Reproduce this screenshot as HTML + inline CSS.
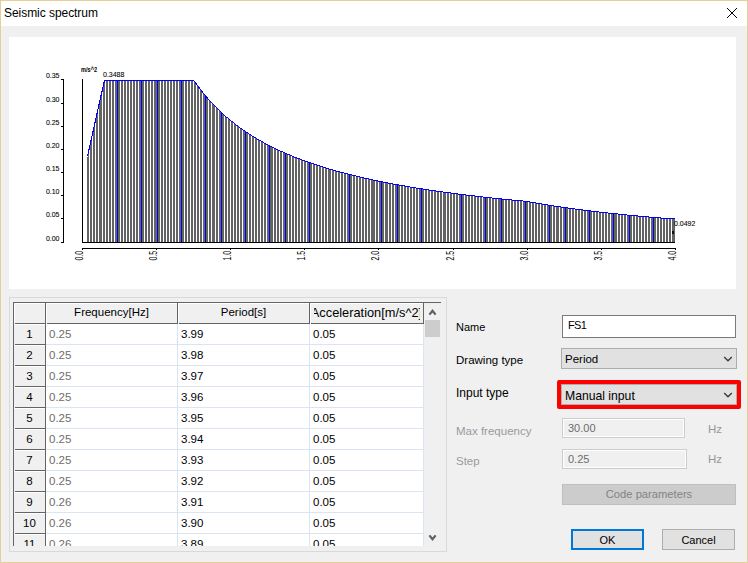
<!DOCTYPE html>
<html><head><meta charset="utf-8">
<style>
html,body{margin:0;padding:0;}
body{width:748px;height:563px;overflow:hidden;position:relative;background:#f0f0f0;font-family:"Liberation Sans",sans-serif;font-size:11.5px;color:#000;}
.a{position:absolute;}
.t{position:absolute;white-space:nowrap;line-height:1;}
#win{left:0;top:0;width:746px;height:561px;border:1px solid #e6cf95;}
#title{left:1px;top:1px;width:746px;height:25px;background:#fff;}
#chart{left:9px;top:37px;width:727px;height:252px;background:#fff;}
.box{position:absolute;box-sizing:border-box;}
.lbl{position:absolute;white-space:nowrap;line-height:1;font-size:11.5px;}
.grid .c{position:absolute;white-space:nowrap;line-height:1;font-size:11.5px;}
</style></head><body>
<div class="a" id="win"></div>
<div class="a" id="title"></div>
<div class="t" style="left:4px;top:7px;font-size:12px;letter-spacing:-0.05px;">Seismic spectrum</div>
<div class="a" id="chart"></div>
<svg class="a" style="left:0;top:0" width="748" height="563" shape-rendering="crispEdges">
<rect x="87" y="157" width="1" height="85" fill="#646464"/>
<rect x="88" y="152" width="1" height="90" fill="#646464"/>
<rect x="90" y="143" width="1" height="99" fill="#646464"/>
<rect x="91" y="139" width="1" height="103" fill="#646464"/>
<rect x="93" y="130" width="1" height="112" fill="#646464"/>
<rect x="94" y="125" width="1" height="117" fill="#646464"/>
<rect x="96" y="116" width="1" height="126" fill="#646464"/>
<rect x="97" y="112" width="1" height="130" fill="#646464"/>
<rect x="99" y="103" width="1" height="139" fill="#646464"/>
<rect x="100" y="98" width="1" height="144" fill="#646464"/>
<rect x="101" y="94" width="1" height="148" fill="#646464"/>
<rect x="103" y="85" width="1" height="157" fill="#646464"/>
<rect x="104" y="81" width="1" height="161" fill="#646464"/>
<rect x="106" y="81" width="2" height="161" fill="#646464"/>
<rect x="109" y="81" width="2" height="161" fill="#646464"/>
<rect x="112" y="81" width="2" height="161" fill="#646464"/>
<rect x="115" y="81" width="2" height="161" fill="#646464"/>
<rect x="118" y="81" width="2" height="161" fill="#646464"/>
<rect x="121" y="81" width="2" height="161" fill="#646464"/>
<rect x="124" y="81" width="2" height="161" fill="#646464"/>
<rect x="127" y="81" width="2" height="161" fill="#646464"/>
<rect x="130" y="81" width="2" height="161" fill="#646464"/>
<rect x="133" y="81" width="2" height="161" fill="#646464"/>
<rect x="136" y="81" width="2" height="161" fill="#646464"/>
<rect x="139" y="81" width="2" height="161" fill="#646464"/>
<rect x="142" y="81" width="2" height="161" fill="#646464"/>
<rect x="145" y="81" width="2" height="161" fill="#646464"/>
<rect x="148" y="81" width="2" height="161" fill="#646464"/>
<rect x="151" y="81" width="2" height="161" fill="#646464"/>
<rect x="154" y="81" width="3" height="161" fill="#646464"/>
<rect x="158" y="81" width="2" height="161" fill="#646464"/>
<rect x="161" y="81" width="2" height="161" fill="#646464"/>
<rect x="164" y="81" width="2" height="161" fill="#646464"/>
<rect x="167" y="81" width="2" height="161" fill="#646464"/>
<rect x="170" y="81" width="2" height="161" fill="#646464"/>
<rect x="173" y="81" width="2" height="161" fill="#646464"/>
<rect x="176" y="81" width="2" height="161" fill="#646464"/>
<rect x="179" y="81" width="2" height="161" fill="#646464"/>
<rect x="182" y="81" width="2" height="161" fill="#646464"/>
<rect x="185" y="81" width="2" height="161" fill="#646464"/>
<rect x="188" y="81" width="2" height="161" fill="#646464"/>
<rect x="191" y="81" width="2" height="161" fill="#646464"/>
<rect x="194" y="82" width="1" height="160" fill="#646464"/>
<rect x="195" y="83" width="1" height="159" fill="#646464"/>
<rect x="197" y="86" width="1" height="156" fill="#646464"/>
<rect x="198" y="87" width="1" height="155" fill="#646464"/>
<rect x="200" y="90" width="1" height="152" fill="#646464"/>
<rect x="201" y="91" width="1" height="151" fill="#646464"/>
<rect x="203" y="94" width="1" height="148" fill="#646464"/>
<rect x="204" y="95" width="1" height="147" fill="#646464"/>
<rect x="206" y="97" width="1" height="145" fill="#646464"/>
<rect x="207" y="99" width="1" height="143" fill="#646464"/>
<rect x="209" y="101" width="1" height="141" fill="#646464"/>
<rect x="210" y="102" width="1" height="140" fill="#646464"/>
<rect x="212" y="104" width="1" height="138" fill="#646464"/>
<rect x="213" y="105" width="1" height="137" fill="#646464"/>
<rect x="214" y="106" width="1" height="136" fill="#646464"/>
<rect x="216" y="108" width="1" height="134" fill="#646464"/>
<rect x="217" y="109" width="1" height="133" fill="#646464"/>
<rect x="219" y="111" width="1" height="131" fill="#646464"/>
<rect x="220" y="112" width="1" height="130" fill="#646464"/>
<rect x="222" y="114" width="1" height="128" fill="#646464"/>
<rect x="223" y="115" width="1" height="127" fill="#646464"/>
<rect x="225" y="117" width="1" height="125" fill="#646464"/>
<rect x="226" y="118" width="1" height="124" fill="#646464"/>
<rect x="228" y="119" width="1" height="123" fill="#646464"/>
<rect x="229" y="120" width="1" height="122" fill="#646464"/>
<rect x="231" y="122" width="2" height="120" fill="#646464"/>
<rect x="234" y="124" width="1" height="118" fill="#646464"/>
<rect x="235" y="125" width="1" height="117" fill="#646464"/>
<rect x="237" y="126" width="1" height="116" fill="#646464"/>
<rect x="238" y="127" width="1" height="115" fill="#646464"/>
<rect x="240" y="129" width="2" height="113" fill="#646464"/>
<rect x="243" y="131" width="2" height="111" fill="#646464"/>
<rect x="246" y="133" width="2" height="109" fill="#646464"/>
<rect x="249" y="135" width="2" height="107" fill="#646464"/>
<rect x="252" y="137" width="2" height="105" fill="#646464"/>
<rect x="255" y="138" width="1" height="104" fill="#646464"/>
<rect x="256" y="139" width="1" height="103" fill="#646464"/>
<rect x="258" y="140" width="1" height="102" fill="#646464"/>
<rect x="259" y="141" width="1" height="101" fill="#646464"/>
<rect x="261" y="142" width="2" height="100" fill="#646464"/>
<rect x="264" y="144" width="2" height="98" fill="#646464"/>
<rect x="267" y="145" width="1" height="97" fill="#646464"/>
<rect x="268" y="146" width="1" height="96" fill="#646464"/>
<rect x="270" y="147" width="2" height="95" fill="#646464"/>
<rect x="272" y="148" width="1" height="94" fill="#646464"/>
<rect x="274" y="149" width="2" height="93" fill="#646464"/>
<rect x="277" y="150" width="1" height="92" fill="#646464"/>
<rect x="278" y="151" width="1" height="91" fill="#646464"/>
<rect x="280" y="152" width="2" height="90" fill="#646464"/>
<rect x="283" y="153" width="2" height="89" fill="#646464"/>
<rect x="286" y="154" width="1" height="88" fill="#646464"/>
<rect x="287" y="155" width="1" height="87" fill="#646464"/>
<rect x="289" y="155" width="1" height="87" fill="#646464"/>
<rect x="290" y="156" width="1" height="86" fill="#646464"/>
<rect x="292" y="157" width="2" height="85" fill="#646464"/>
<rect x="295" y="158" width="2" height="84" fill="#646464"/>
<rect x="298" y="159" width="2" height="83" fill="#646464"/>
<rect x="301" y="160" width="1" height="82" fill="#646464"/>
<rect x="302" y="161" width="1" height="81" fill="#646464"/>
<rect x="304" y="161" width="1" height="81" fill="#646464"/>
<rect x="305" y="162" width="1" height="80" fill="#646464"/>
<rect x="307" y="162" width="1" height="80" fill="#646464"/>
<rect x="308" y="163" width="1" height="79" fill="#646464"/>
<rect x="310" y="163" width="1" height="79" fill="#646464"/>
<rect x="311" y="164" width="1" height="78" fill="#646464"/>
<rect x="313" y="164" width="1" height="78" fill="#646464"/>
<rect x="314" y="165" width="1" height="77" fill="#646464"/>
<rect x="316" y="165" width="1" height="77" fill="#646464"/>
<rect x="317" y="166" width="1" height="76" fill="#646464"/>
<rect x="319" y="166" width="1" height="76" fill="#646464"/>
<rect x="320" y="167" width="1" height="75" fill="#646464"/>
<rect x="322" y="167" width="1" height="75" fill="#646464"/>
<rect x="323" y="168" width="1" height="74" fill="#646464"/>
<rect x="325" y="168" width="1" height="74" fill="#646464"/>
<rect x="326" y="169" width="1" height="73" fill="#646464"/>
<rect x="328" y="169" width="1" height="73" fill="#646464"/>
<rect x="329" y="170" width="2" height="72" fill="#646464"/>
<rect x="332" y="170" width="1" height="72" fill="#646464"/>
<rect x="333" y="171" width="1" height="71" fill="#646464"/>
<rect x="335" y="171" width="1" height="71" fill="#646464"/>
<rect x="336" y="172" width="1" height="70" fill="#646464"/>
<rect x="338" y="172" width="2" height="70" fill="#646464"/>
<rect x="341" y="173" width="2" height="69" fill="#646464"/>
<rect x="344" y="174" width="2" height="68" fill="#646464"/>
<rect x="347" y="174" width="1" height="68" fill="#646464"/>
<rect x="348" y="175" width="1" height="67" fill="#646464"/>
<rect x="350" y="175" width="2" height="67" fill="#646464"/>
<rect x="353" y="176" width="2" height="66" fill="#646464"/>
<rect x="356" y="177" width="2" height="65" fill="#646464"/>
<rect x="359" y="177" width="1" height="65" fill="#646464"/>
<rect x="360" y="178" width="1" height="64" fill="#646464"/>
<rect x="362" y="178" width="2" height="64" fill="#646464"/>
<rect x="365" y="179" width="2" height="63" fill="#646464"/>
<rect x="368" y="179" width="1" height="63" fill="#646464"/>
<rect x="369" y="180" width="1" height="62" fill="#646464"/>
<rect x="371" y="180" width="2" height="62" fill="#646464"/>
<rect x="373" y="181" width="2" height="61" fill="#646464"/>
<rect x="376" y="181" width="2" height="61" fill="#646464"/>
<rect x="379" y="182" width="2" height="60" fill="#646464"/>
<rect x="382" y="182" width="1" height="60" fill="#646464"/>
<rect x="383" y="183" width="1" height="59" fill="#646464"/>
<rect x="385" y="183" width="3" height="59" fill="#646464"/>
<rect x="389" y="184" width="2" height="58" fill="#646464"/>
<rect x="392" y="184" width="1" height="58" fill="#646464"/>
<rect x="393" y="185" width="1" height="57" fill="#646464"/>
<rect x="395" y="185" width="2" height="57" fill="#646464"/>
<rect x="398" y="185" width="1" height="57" fill="#646464"/>
<rect x="399" y="186" width="1" height="56" fill="#646464"/>
<rect x="401" y="186" width="2" height="56" fill="#646464"/>
<rect x="404" y="186" width="1" height="56" fill="#646464"/>
<rect x="405" y="187" width="1" height="55" fill="#646464"/>
<rect x="407" y="187" width="2" height="55" fill="#646464"/>
<rect x="410" y="188" width="2" height="54" fill="#646464"/>
<rect x="413" y="188" width="2" height="54" fill="#646464"/>
<rect x="416" y="189" width="2" height="53" fill="#646464"/>
<rect x="419" y="189" width="2" height="53" fill="#646464"/>
<rect x="422" y="189" width="1" height="53" fill="#646464"/>
<rect x="423" y="190" width="1" height="52" fill="#646464"/>
<rect x="425" y="190" width="2" height="52" fill="#646464"/>
<rect x="428" y="190" width="1" height="52" fill="#646464"/>
<rect x="429" y="191" width="1" height="51" fill="#646464"/>
<rect x="431" y="191" width="2" height="51" fill="#646464"/>
<rect x="434" y="191" width="2" height="51" fill="#646464"/>
<rect x="437" y="192" width="2" height="50" fill="#646464"/>
<rect x="440" y="192" width="2" height="50" fill="#646464"/>
<rect x="443" y="193" width="3" height="49" fill="#646464"/>
<rect x="447" y="193" width="2" height="49" fill="#646464"/>
<rect x="450" y="193" width="1" height="49" fill="#646464"/>
<rect x="451" y="194" width="1" height="48" fill="#646464"/>
<rect x="453" y="194" width="2" height="48" fill="#646464"/>
<rect x="456" y="194" width="2" height="48" fill="#646464"/>
<rect x="459" y="195" width="2" height="47" fill="#646464"/>
<rect x="462" y="195" width="2" height="47" fill="#646464"/>
<rect x="465" y="195" width="1" height="47" fill="#646464"/>
<rect x="466" y="196" width="1" height="46" fill="#646464"/>
<rect x="468" y="196" width="2" height="46" fill="#646464"/>
<rect x="471" y="196" width="2" height="46" fill="#646464"/>
<rect x="474" y="196" width="1" height="46" fill="#646464"/>
<rect x="475" y="197" width="1" height="45" fill="#646464"/>
<rect x="477" y="197" width="2" height="45" fill="#646464"/>
<rect x="480" y="197" width="2" height="45" fill="#646464"/>
<rect x="483" y="198" width="2" height="44" fill="#646464"/>
<rect x="486" y="198" width="2" height="44" fill="#646464"/>
<rect x="489" y="198" width="2" height="44" fill="#646464"/>
<rect x="492" y="199" width="2" height="43" fill="#646464"/>
<rect x="495" y="199" width="2" height="43" fill="#646464"/>
<rect x="498" y="199" width="3" height="43" fill="#646464"/>
<rect x="502" y="200" width="2" height="42" fill="#646464"/>
<rect x="505" y="200" width="2" height="42" fill="#646464"/>
<rect x="508" y="200" width="2" height="42" fill="#646464"/>
<rect x="511" y="200" width="1" height="42" fill="#646464"/>
<rect x="512" y="201" width="1" height="41" fill="#646464"/>
<rect x="514" y="201" width="2" height="41" fill="#646464"/>
<rect x="517" y="201" width="2" height="41" fill="#646464"/>
<rect x="520" y="201" width="2" height="41" fill="#646464"/>
<rect x="523" y="202" width="2" height="40" fill="#646464"/>
<rect x="526" y="202" width="2" height="40" fill="#646464"/>
<rect x="529" y="202" width="1" height="40" fill="#646464"/>
<rect x="530" y="203" width="1" height="39" fill="#646464"/>
<rect x="532" y="203" width="2" height="39" fill="#646464"/>
<rect x="535" y="203" width="1" height="39" fill="#646464"/>
<rect x="536" y="204" width="1" height="38" fill="#646464"/>
<rect x="538" y="204" width="2" height="38" fill="#646464"/>
<rect x="541" y="204" width="1" height="38" fill="#646464"/>
<rect x="542" y="205" width="1" height="37" fill="#646464"/>
<rect x="544" y="205" width="2" height="37" fill="#646464"/>
<rect x="547" y="205" width="1" height="37" fill="#646464"/>
<rect x="548" y="206" width="1" height="36" fill="#646464"/>
<rect x="550" y="206" width="2" height="36" fill="#646464"/>
<rect x="553" y="206" width="1" height="36" fill="#646464"/>
<rect x="554" y="207" width="1" height="35" fill="#646464"/>
<rect x="556" y="207" width="3" height="35" fill="#646464"/>
<rect x="560" y="207" width="1" height="35" fill="#646464"/>
<rect x="561" y="208" width="1" height="34" fill="#646464"/>
<rect x="563" y="208" width="2" height="34" fill="#646464"/>
<rect x="566" y="208" width="2" height="34" fill="#646464"/>
<rect x="569" y="209" width="2" height="33" fill="#646464"/>
<rect x="572" y="209" width="2" height="33" fill="#646464"/>
<rect x="575" y="210" width="2" height="32" fill="#646464"/>
<rect x="578" y="210" width="2" height="32" fill="#646464"/>
<rect x="581" y="210" width="2" height="32" fill="#646464"/>
<rect x="584" y="211" width="2" height="31" fill="#646464"/>
<rect x="587" y="211" width="2" height="31" fill="#646464"/>
<rect x="590" y="211" width="1" height="31" fill="#646464"/>
<rect x="591" y="212" width="1" height="30" fill="#646464"/>
<rect x="593" y="212" width="2" height="30" fill="#646464"/>
<rect x="596" y="212" width="2" height="30" fill="#646464"/>
<rect x="599" y="213" width="2" height="29" fill="#646464"/>
<rect x="602" y="213" width="2" height="29" fill="#646464"/>
<rect x="605" y="213" width="2" height="29" fill="#646464"/>
<rect x="608" y="214" width="2" height="28" fill="#646464"/>
<rect x="611" y="214" width="2" height="28" fill="#646464"/>
<rect x="614" y="214" width="3" height="28" fill="#646464"/>
<rect x="618" y="215" width="2" height="27" fill="#646464"/>
<rect x="621" y="215" width="2" height="27" fill="#646464"/>
<rect x="624" y="215" width="2" height="27" fill="#646464"/>
<rect x="627" y="216" width="2" height="26" fill="#646464"/>
<rect x="630" y="216" width="2" height="26" fill="#646464"/>
<rect x="633" y="216" width="2" height="26" fill="#646464"/>
<rect x="636" y="216" width="2" height="26" fill="#646464"/>
<rect x="639" y="217" width="2" height="25" fill="#646464"/>
<rect x="642" y="217" width="2" height="25" fill="#646464"/>
<rect x="645" y="217" width="2" height="25" fill="#646464"/>
<rect x="648" y="217" width="1" height="25" fill="#646464"/>
<rect x="649" y="218" width="1" height="24" fill="#646464"/>
<rect x="651" y="218" width="2" height="24" fill="#646464"/>
<rect x="654" y="218" width="2" height="24" fill="#646464"/>
<rect x="657" y="218" width="2" height="24" fill="#646464"/>
<rect x="660" y="218" width="1" height="24" fill="#646464"/>
<rect x="661" y="219" width="1" height="23" fill="#646464"/>
<rect x="663" y="219" width="2" height="23" fill="#646464"/>
<rect x="666" y="219" width="2" height="23" fill="#646464"/>
<rect x="669" y="219" width="2" height="23" fill="#646464"/>
<rect x="672" y="219" width="3" height="23" fill="#646464"/>
<rect x="117" y="80" width="1" height="162" fill="#0000ff"/>
<rect x="141" y="80" width="1" height="162" fill="#0000ff"/>
<rect x="157" y="80" width="1" height="162" fill="#0000ff"/>
<rect x="181" y="80" width="1" height="162" fill="#0000ff"/>
<rect x="205" y="95" width="1" height="147" fill="#0000ff"/>
<rect x="221" y="112" width="1" height="130" fill="#0000ff"/>
<rect x="245" y="131" width="1" height="111" fill="#0000ff"/>
<rect x="269" y="145" width="1" height="97" fill="#0000ff"/>
<rect x="285" y="153" width="1" height="89" fill="#0000ff"/>
<rect x="309" y="162" width="1" height="80" fill="#0000ff"/>
<rect x="349" y="174" width="1" height="68" fill="#0000ff"/>
<rect x="381" y="181" width="1" height="61" fill="#0000ff"/>
<rect x="397" y="184" width="1" height="58" fill="#0000ff"/>
<rect x="421" y="188" width="1" height="54" fill="#0000ff"/>
<rect x="461" y="194" width="1" height="48" fill="#0000ff"/>
<rect x="485" y="197" width="1" height="45" fill="#0000ff"/>
<rect x="501" y="198" width="1" height="44" fill="#0000ff"/>
<rect x="525" y="201" width="1" height="41" fill="#0000ff"/>
<rect x="549" y="205" width="1" height="37" fill="#0000ff"/>
<rect x="565" y="207" width="1" height="35" fill="#0000ff"/>
<rect x="589" y="210" width="1" height="32" fill="#0000ff"/>
<rect x="613" y="213" width="1" height="29" fill="#0000ff"/>
<rect x="629" y="215" width="1" height="27" fill="#0000ff"/>
<rect x="653" y="217" width="1" height="25" fill="#0000ff"/>
<polyline points="87.5,156.5 88.5,151.5 89.5,147.5 90.5,142.5 91.5,138.5 92.5,133.5 93.5,129.5 94.5,124.5 95.5,120.5 96.5,115.5 97.5,111.5 98.5,106.5 99.5,102.5 100.5,97.5 101.5,93.5 102.5,89.5 103.5,84.5 104.5,80.5 105.5,80.5 106.5,80.5 107.5,80.5 108.5,80.5 109.5,80.5 110.5,80.5 111.5,80.5 112.5,80.5 113.5,80.5 114.5,80.5 115.5,80.5 116.5,80.5 117.5,80.5 118.5,80.5 119.5,80.5 120.5,80.5 121.5,80.5 122.5,80.5 123.5,80.5 124.5,80.5 125.5,80.5 126.5,80.5 127.5,80.5 128.5,80.5 129.5,80.5 130.5,80.5 131.5,80.5 132.5,80.5 133.5,80.5 134.5,80.5 135.5,80.5 136.5,80.5 137.5,80.5 138.5,80.5 139.5,80.5 140.5,80.5 141.5,80.5 142.5,80.5 143.5,80.5 144.5,80.5 145.5,80.5 146.5,80.5 147.5,80.5 148.5,80.5 149.5,80.5 150.5,80.5 151.5,80.5 152.5,80.5 153.5,80.5 154.5,80.5 155.5,80.5 156.5,80.5 157.5,80.5 158.5,80.5 159.5,80.5 160.5,80.5 161.5,80.5 162.5,80.5 163.5,80.5 164.5,80.5 165.5,80.5 166.5,80.5 167.5,80.5 168.5,80.5 169.5,80.5 170.5,80.5 171.5,80.5 172.5,80.5 173.5,80.5 174.5,80.5 175.5,80.5 176.5,80.5 177.5,80.5 178.5,80.5 179.5,80.5 180.5,80.5 181.5,80.5 182.5,80.5 183.5,80.5 184.5,80.5 185.5,80.5 186.5,80.5 187.5,80.5 188.5,80.5 189.5,80.5 190.5,80.5 191.5,80.5 192.5,80.5 193.5,80.5 194.5,81.5 195.5,82.5 196.5,84.5 197.5,85.5 198.5,86.5 199.5,88.5 200.5,89.5 201.5,90.5 202.5,92.5 203.5,93.5 204.5,94.5 205.5,95.5 206.5,96.5 207.5,98.5 208.5,99.5 209.5,100.5 210.5,101.5 211.5,102.5 212.5,103.5 213.5,104.5 214.5,105.5 215.5,106.5 216.5,107.5 217.5,108.5 218.5,109.5 219.5,110.5 220.5,111.5 221.5,112.5 222.5,113.5 223.5,114.5 224.5,115.5 225.5,116.5 226.5,117.5 227.5,117.5 228.5,118.5 229.5,119.5 230.5,120.5 231.5,121.5 232.5,121.5 233.5,122.5 234.5,123.5 235.5,124.5 236.5,125.5 237.5,125.5 238.5,126.5 239.5,127.5 240.5,128.5 241.5,128.5 242.5,129.5 243.5,130.5 244.5,130.5 245.5,131.5 246.5,132.5 247.5,132.5 248.5,133.5 249.5,134.5 250.5,134.5 251.5,135.5 252.5,136.5 253.5,136.5 254.5,137.5 255.5,137.5 256.5,138.5 257.5,139.5 258.5,139.5 259.5,140.5 260.5,140.5 261.5,141.5 262.5,141.5 263.5,142.5 264.5,143.5 265.5,143.5 266.5,144.5 267.5,144.5 268.5,145.5 269.5,145.5 270.5,146.5 271.5,146.5 272.5,147.5 273.5,147.5 274.5,148.5 275.5,148.5 276.5,149.5 277.5,149.5 278.5,150.5 279.5,150.5 280.5,151.5 281.5,151.5 282.5,151.5 283.5,152.5 284.5,152.5 285.5,153.5 286.5,153.5 287.5,154.5 288.5,154.5 289.5,154.5 290.5,155.5 291.5,155.5 292.5,156.5 293.5,156.5 294.5,157.5 295.5,157.5 296.5,157.5 297.5,158.5 298.5,158.5 299.5,158.5 300.5,159.5 301.5,159.5 302.5,160.5 303.5,160.5 304.5,160.5 305.5,161.5 306.5,161.5 307.5,161.5 308.5,162.5 309.5,162.5 310.5,162.5 311.5,163.5 312.5,163.5 313.5,163.5 314.5,164.5 315.5,164.5 316.5,164.5 317.5,165.5 318.5,165.5 319.5,165.5 320.5,166.5 321.5,166.5 322.5,166.5 323.5,167.5 324.5,167.5 325.5,167.5 326.5,168.5 327.5,168.5 328.5,168.5 329.5,169.5 330.5,169.5 331.5,169.5 332.5,169.5 333.5,170.5 334.5,170.5 335.5,170.5 336.5,171.5 337.5,171.5 338.5,171.5 339.5,171.5 340.5,172.5 341.5,172.5 342.5,172.5 343.5,172.5 344.5,173.5 345.5,173.5 346.5,173.5 347.5,173.5 348.5,174.5 349.5,174.5 350.5,174.5 351.5,174.5 352.5,175.5 353.5,175.5 354.5,175.5 355.5,175.5 356.5,176.5 357.5,176.5 358.5,176.5 359.5,176.5 360.5,177.5 361.5,177.5 362.5,177.5 363.5,177.5 364.5,178.5 365.5,178.5 366.5,178.5 367.5,178.5 368.5,178.5 369.5,179.5 370.5,179.5 371.5,179.5 372.5,179.5 373.5,180.5 374.5,180.5 375.5,180.5 376.5,180.5 377.5,180.5 378.5,181.5 379.5,181.5 380.5,181.5 381.5,181.5 382.5,181.5 383.5,182.5 384.5,182.5 385.5,182.5 386.5,182.5 387.5,182.5 388.5,183.5 389.5,183.5 390.5,183.5 391.5,183.5 392.5,183.5 393.5,184.5 394.5,184.5 395.5,184.5 396.5,184.5 397.5,184.5 398.5,184.5 399.5,185.5 400.5,185.5 401.5,185.5 402.5,185.5 403.5,185.5 404.5,185.5 405.5,186.5 406.5,186.5 407.5,186.5 408.5,186.5 409.5,186.5 410.5,187.5 411.5,187.5 412.5,187.5 413.5,187.5 414.5,187.5 415.5,187.5 416.5,188.5 417.5,188.5 418.5,188.5 419.5,188.5 420.5,188.5 421.5,188.5 422.5,188.5 423.5,189.5 424.5,189.5 425.5,189.5 426.5,189.5 427.5,189.5 428.5,189.5 429.5,190.5 430.5,190.5 431.5,190.5 432.5,190.5 433.5,190.5 434.5,190.5 435.5,190.5 436.5,191.5 437.5,191.5 438.5,191.5 439.5,191.5 440.5,191.5 441.5,191.5 442.5,191.5 443.5,192.5 444.5,192.5 445.5,192.5 446.5,192.5 447.5,192.5 448.5,192.5 449.5,192.5 450.5,192.5 451.5,193.5 452.5,193.5 453.5,193.5 454.5,193.5 455.5,193.5 456.5,193.5 457.5,193.5 458.5,194.5 459.5,194.5 460.5,194.5 461.5,194.5 462.5,194.5 463.5,194.5 464.5,194.5 465.5,194.5 466.5,195.5 467.5,195.5 468.5,195.5 469.5,195.5 470.5,195.5 471.5,195.5 472.5,195.5 473.5,195.5 474.5,195.5 475.5,196.5 476.5,196.5 477.5,196.5 478.5,196.5 479.5,196.5 480.5,196.5 481.5,196.5 482.5,196.5 483.5,197.5 484.5,197.5 485.5,197.5 486.5,197.5 487.5,197.5 488.5,197.5 489.5,197.5 490.5,197.5 491.5,197.5 492.5,198.5 493.5,198.5 494.5,198.5 495.5,198.5 496.5,198.5 497.5,198.5 498.5,198.5 499.5,198.5 500.5,198.5 501.5,198.5 502.5,199.5 503.5,199.5 504.5,199.5 505.5,199.5 506.5,199.5 507.5,199.5 508.5,199.5 509.5,199.5 510.5,199.5 511.5,199.5 512.5,200.5 513.5,200.5 514.5,200.5 515.5,200.5 516.5,200.5 517.5,200.5 518.5,200.5 519.5,200.5 520.5,200.5 521.5,200.5 522.5,200.5 523.5,201.5 524.5,201.5 525.5,201.5 526.5,201.5 527.5,201.5 528.5,201.5 529.5,201.5 530.5,202.5 531.5,202.5 532.5,202.5 533.5,202.5 534.5,202.5 535.5,202.5 536.5,203.5 537.5,203.5 538.5,203.5 539.5,203.5 540.5,203.5 541.5,203.5 542.5,204.5 543.5,204.5 544.5,204.5 545.5,204.5 546.5,204.5 547.5,204.5 548.5,205.5 549.5,205.5 550.5,205.5 551.5,205.5 552.5,205.5 553.5,205.5 554.5,206.5 555.5,206.5 556.5,206.5 557.5,206.5 558.5,206.5 559.5,206.5 560.5,206.5 561.5,207.5 562.5,207.5 563.5,207.5 564.5,207.5 565.5,207.5 566.5,207.5 567.5,207.5 568.5,208.5 569.5,208.5 570.5,208.5 571.5,208.5 572.5,208.5 573.5,208.5 574.5,208.5 575.5,209.5 576.5,209.5 577.5,209.5 578.5,209.5 579.5,209.5 580.5,209.5 581.5,209.5 582.5,209.5 583.5,210.5 584.5,210.5 585.5,210.5 586.5,210.5 587.5,210.5 588.5,210.5 589.5,210.5 590.5,210.5 591.5,211.5 592.5,211.5 593.5,211.5 594.5,211.5 595.5,211.5 596.5,211.5 597.5,211.5 598.5,211.5 599.5,212.5 600.5,212.5 601.5,212.5 602.5,212.5 603.5,212.5 604.5,212.5 605.5,212.5 606.5,212.5 607.5,212.5 608.5,213.5 609.5,213.5 610.5,213.5 611.5,213.5 612.5,213.5 613.5,213.5 614.5,213.5 615.5,213.5 616.5,213.5 617.5,213.5 618.5,214.5 619.5,214.5 620.5,214.5 621.5,214.5 622.5,214.5 623.5,214.5 624.5,214.5 625.5,214.5 626.5,214.5 627.5,215.5 628.5,215.5 629.5,215.5 630.5,215.5 631.5,215.5 632.5,215.5 633.5,215.5 634.5,215.5 635.5,215.5 636.5,215.5 637.5,215.5 638.5,216.5 639.5,216.5 640.5,216.5 641.5,216.5 642.5,216.5 643.5,216.5 644.5,216.5 645.5,216.5 646.5,216.5 647.5,216.5 648.5,216.5 649.5,217.5 650.5,217.5 651.5,217.5 652.5,217.5 653.5,217.5 654.5,217.5 655.5,217.5 656.5,217.5 657.5,217.5 658.5,217.5 659.5,217.5 660.5,217.5 661.5,218.5 662.5,218.5 663.5,218.5 664.5,218.5 665.5,218.5 666.5,218.5 667.5,218.5 668.5,218.5 669.5,218.5 670.5,218.5 671.5,218.5 672.5,218.5 673.5,218.5 674.5,218.5" fill="none" stroke="#0000ff" stroke-width="1"/>
<rect x="727" y="8" width="1" height="1" fill="#000"/>
<rect x="736" y="8" width="1" height="1" fill="#000"/>
<rect x="728" y="9" width="1" height="1" fill="#000"/>
<rect x="735" y="9" width="1" height="1" fill="#000"/>
<rect x="729" y="10" width="1" height="1" fill="#000"/>
<rect x="734" y="10" width="1" height="1" fill="#000"/>
<rect x="730" y="11" width="1" height="1" fill="#000"/>
<rect x="733" y="11" width="1" height="1" fill="#000"/>
<rect x="731" y="12" width="1" height="1" fill="#000"/>
<rect x="732" y="12" width="1" height="1" fill="#000"/>
<rect x="732" y="13" width="1" height="1" fill="#000"/>
<rect x="731" y="13" width="1" height="1" fill="#000"/>
<rect x="733" y="14" width="1" height="1" fill="#000"/>
<rect x="730" y="14" width="1" height="1" fill="#000"/>
<rect x="734" y="15" width="1" height="1" fill="#000"/>
<rect x="729" y="15" width="1" height="1" fill="#000"/>
<rect x="735" y="16" width="1" height="1" fill="#000"/>
<rect x="728" y="16" width="1" height="1" fill="#000"/>
<rect x="736" y="17" width="1" height="1" fill="#000"/>
<rect x="727" y="17" width="1" height="1" fill="#000"/>
<rect x="82" y="79" width="1" height="164" fill="#000"/>
<rect x="82" y="242" width="593" height="1" fill="#000"/>
<rect x="63" y="79" width="1" height="164" fill="#000"/>
<rect x="61" y="242" width="2" height="1" fill="#000"/>
<text x="59.5" y="241" text-anchor="end" font-size="7" font-family="Liberation Sans" fill="#000" stroke="#000" stroke-width="0.08" shape-rendering="auto">0.00</text>
<rect x="61" y="218" width="2" height="1" fill="#000"/>
<text x="59.5" y="217" text-anchor="end" font-size="7" font-family="Liberation Sans" fill="#000" stroke="#000" stroke-width="0.08" shape-rendering="auto">0.05</text>
<rect x="61" y="195" width="2" height="1" fill="#000"/>
<text x="59.5" y="194" text-anchor="end" font-size="7" font-family="Liberation Sans" fill="#000" stroke="#000" stroke-width="0.08" shape-rendering="auto">0.10</text>
<rect x="61" y="172" width="2" height="1" fill="#000"/>
<text x="59.5" y="171" text-anchor="end" font-size="7" font-family="Liberation Sans" fill="#000" stroke="#000" stroke-width="0.08" shape-rendering="auto">0.15</text>
<rect x="61" y="149" width="2" height="1" fill="#000"/>
<text x="59.5" y="148" text-anchor="end" font-size="7" font-family="Liberation Sans" fill="#000" stroke="#000" stroke-width="0.08" shape-rendering="auto">0.20</text>
<rect x="61" y="126" width="2" height="1" fill="#000"/>
<text x="59.5" y="125" text-anchor="end" font-size="7" font-family="Liberation Sans" fill="#000" stroke="#000" stroke-width="0.08" shape-rendering="auto">0.25</text>
<rect x="61" y="103" width="2" height="1" fill="#000"/>
<text x="59.5" y="102" text-anchor="end" font-size="7" font-family="Liberation Sans" fill="#000" stroke="#000" stroke-width="0.08" shape-rendering="auto">0.30</text>
<rect x="61" y="79" width="2" height="1" fill="#000"/>
<text x="59.5" y="78" text-anchor="end" font-size="7" font-family="Liberation Sans" fill="#000" stroke="#000" stroke-width="0.08" shape-rendering="auto">0.35</text>
<rect x="82" y="248" width="594" height="1" fill="#000"/>
<rect x="82" y="249" width="1" height="1" fill="#000"/>
<text transform="translate(83,251) rotate(-90) scale(0.64,1)" text-anchor="end" font-size="10.8" font-family="Liberation Sans" fill="#000">0.0</text>
<rect x="156" y="249" width="1" height="1" fill="#000"/>
<text transform="translate(157,251) rotate(-90) scale(0.64,1)" text-anchor="end" font-size="10.8" font-family="Liberation Sans" fill="#000">0.5</text>
<rect x="230" y="249" width="1" height="1" fill="#000"/>
<text transform="translate(231,251) rotate(-90) scale(0.64,1)" text-anchor="end" font-size="10.8" font-family="Liberation Sans" fill="#000">1.0</text>
<rect x="304" y="249" width="1" height="1" fill="#000"/>
<text transform="translate(305,251) rotate(-90) scale(0.64,1)" text-anchor="end" font-size="10.8" font-family="Liberation Sans" fill="#000">1.5</text>
<rect x="378" y="249" width="1" height="1" fill="#000"/>
<text transform="translate(379,251) rotate(-90) scale(0.64,1)" text-anchor="end" font-size="10.8" font-family="Liberation Sans" fill="#000">2.0</text>
<rect x="453" y="249" width="1" height="1" fill="#000"/>
<text transform="translate(454,251) rotate(-90) scale(0.64,1)" text-anchor="end" font-size="10.8" font-family="Liberation Sans" fill="#000">2.5</text>
<rect x="527" y="249" width="1" height="1" fill="#000"/>
<text transform="translate(528,251) rotate(-90) scale(0.64,1)" text-anchor="end" font-size="10.8" font-family="Liberation Sans" fill="#000">3.0</text>
<rect x="601" y="249" width="1" height="1" fill="#000"/>
<text transform="translate(602,251) rotate(-90) scale(0.64,1)" text-anchor="end" font-size="10.8" font-family="Liberation Sans" fill="#000">3.5</text>
<rect x="675" y="249" width="1" height="1" fill="#000"/>
<text transform="translate(676,251) rotate(-90) scale(0.64,1)" text-anchor="end" font-size="10.8" font-family="Liberation Sans" fill="#000">4.0</text>
<text x="81" y="71.5" font-size="7" font-weight="bold" font-family="Liberation Sans" fill="#000" textLength="16" lengthAdjust="spacingAndGlyphs">m/s^2</text>
<text x="103" y="76.8" font-size="7" font-family="Liberation Sans" fill="#000" stroke="#000" stroke-width="0.08">0.3488</text>
<text x="674" y="226" font-size="7" font-family="Liberation Sans" fill="#000" stroke="#000" stroke-width="0.08">0.0492</text>
<rect x="672" y="231" width="2" height="3" fill="#111"/>
</svg>
<div class="box" style="left:9px;top:297px;width:438px;height:255px;border:1px solid #d9d9d9;"></div>
<div class="a grid" style="left:13px;top:302px;width:429px;height:244px;overflow:hidden;background:#f0f0f0;">
<div class="a" style="left:0px;top:0px;width:428px;height:1px;background:#646464;"></div>
<div class="a" style="left:0px;top:0px;width:1px;height:244px;background:#646464;"></div>
<div class="a" style="left:1px;top:1px;width:31px;height:20px;background:#f0f0f0;"></div>
<div class="a" style="left:1px;top:1px;width:31px;height:1px;background:#ffffff;"></div>
<div class="a" style="left:1px;top:1px;width:1px;height:20px;background:#ffffff;"></div>
<div class="a" style="left:32px;top:0px;width:1px;height:22px;background:#646464;"></div>
<div class="a" style="left:2px;top:21px;width:31px;height:1px;background:#646464;"></div>
<div class="a" style="left:33px;top:1px;width:131px;height:20px;background:#f0f0f0;"></div>
<div class="a" style="left:33px;top:1px;width:131px;height:1px;background:#ffffff;"></div>
<div class="a" style="left:33px;top:1px;width:1px;height:20px;background:#ffffff;"></div>
<div class="a" style="left:164px;top:0px;width:1px;height:22px;background:#646464;"></div>
<div class="a" style="left:34px;top:21px;width:131px;height:1px;background:#646464;"></div>
<div class="c" style="left:33px;top:5px;width:131px;text-align:center;overflow:hidden;">Frequency[Hz]</div>
<div class="a" style="left:165px;top:1px;width:131px;height:20px;background:#f0f0f0;"></div>
<div class="a" style="left:165px;top:1px;width:131px;height:1px;background:#ffffff;"></div>
<div class="a" style="left:165px;top:1px;width:1px;height:20px;background:#ffffff;"></div>
<div class="a" style="left:296px;top:0px;width:1px;height:22px;background:#646464;"></div>
<div class="a" style="left:166px;top:21px;width:131px;height:1px;background:#646464;"></div>
<div class="c" style="left:165px;top:5px;width:131px;text-align:center;overflow:hidden;">Period[s]</div>
<div class="a" style="left:297px;top:1px;width:113px;height:20px;background:#f0f0f0;"></div>
<div class="a" style="left:297px;top:1px;width:113px;height:1px;background:#ffffff;"></div>
<div class="a" style="left:297px;top:1px;width:1px;height:20px;background:#ffffff;"></div>
<div class="a" style="left:410px;top:0px;width:1px;height:22px;background:#646464;"></div>
<div class="a" style="left:298px;top:21px;width:113px;height:1px;background:#646464;"></div>
<div class="a" style="left:301px;top:2px;width:106px;height:18px;overflow:hidden;"><div class="c" style="left:-3.2px;top:3px;font-size:12.8px;">Acceleration[m/s^2]</div></div>
<div class="a" style="left:33px;top:22px;width:377px;height:222px;background:#ffffff;"></div>
<div class="a" style="left:1px;top:22px;width:31px;height:20px;background:#f0f0f0;"></div>
<div class="a" style="left:1px;top:22px;width:31px;height:1px;background:#ffffff;"></div>
<div class="a" style="left:32px;top:22px;width:1px;height:21px;background:#646464;"></div>
<div class="a" style="left:2px;top:42px;width:30px;height:1px;background:#646464;"></div>
<div class="a" style="left:33px;top:42px;width:377px;height:1px;background:#dbe5f1;"></div>
<div class="c" style="left:1px;top:27px;width:31px;text-align:center;">1</div>
<div class="c" style="left:36px;top:27px;color:#6d6d6d;">0.25</div>
<div class="c" style="left:168px;top:27px;">3.99</div>
<div class="c" style="left:300px;top:27px;">0.05</div>
<div class="a" style="left:1px;top:43px;width:31px;height:20px;background:#f0f0f0;"></div>
<div class="a" style="left:1px;top:43px;width:31px;height:1px;background:#ffffff;"></div>
<div class="a" style="left:32px;top:43px;width:1px;height:21px;background:#646464;"></div>
<div class="a" style="left:2px;top:63px;width:30px;height:1px;background:#646464;"></div>
<div class="a" style="left:33px;top:63px;width:377px;height:1px;background:#dbe5f1;"></div>
<div class="c" style="left:1px;top:48px;width:31px;text-align:center;">2</div>
<div class="c" style="left:36px;top:48px;color:#6d6d6d;">0.25</div>
<div class="c" style="left:168px;top:48px;">3.98</div>
<div class="c" style="left:300px;top:48px;">0.05</div>
<div class="a" style="left:1px;top:64px;width:31px;height:20px;background:#f0f0f0;"></div>
<div class="a" style="left:1px;top:64px;width:31px;height:1px;background:#ffffff;"></div>
<div class="a" style="left:32px;top:64px;width:1px;height:21px;background:#646464;"></div>
<div class="a" style="left:2px;top:84px;width:30px;height:1px;background:#646464;"></div>
<div class="a" style="left:33px;top:84px;width:377px;height:1px;background:#dbe5f1;"></div>
<div class="c" style="left:1px;top:69px;width:31px;text-align:center;">3</div>
<div class="c" style="left:36px;top:69px;color:#6d6d6d;">0.25</div>
<div class="c" style="left:168px;top:69px;">3.97</div>
<div class="c" style="left:300px;top:69px;">0.05</div>
<div class="a" style="left:1px;top:85px;width:31px;height:20px;background:#f0f0f0;"></div>
<div class="a" style="left:1px;top:85px;width:31px;height:1px;background:#ffffff;"></div>
<div class="a" style="left:32px;top:85px;width:1px;height:21px;background:#646464;"></div>
<div class="a" style="left:2px;top:105px;width:30px;height:1px;background:#646464;"></div>
<div class="a" style="left:33px;top:105px;width:377px;height:1px;background:#dbe5f1;"></div>
<div class="c" style="left:1px;top:90px;width:31px;text-align:center;">4</div>
<div class="c" style="left:36px;top:90px;color:#6d6d6d;">0.25</div>
<div class="c" style="left:168px;top:90px;">3.96</div>
<div class="c" style="left:300px;top:90px;">0.05</div>
<div class="a" style="left:1px;top:106px;width:31px;height:20px;background:#f0f0f0;"></div>
<div class="a" style="left:1px;top:106px;width:31px;height:1px;background:#ffffff;"></div>
<div class="a" style="left:32px;top:106px;width:1px;height:21px;background:#646464;"></div>
<div class="a" style="left:2px;top:126px;width:30px;height:1px;background:#646464;"></div>
<div class="a" style="left:33px;top:126px;width:377px;height:1px;background:#dbe5f1;"></div>
<div class="c" style="left:1px;top:111px;width:31px;text-align:center;">5</div>
<div class="c" style="left:36px;top:111px;color:#6d6d6d;">0.25</div>
<div class="c" style="left:168px;top:111px;">3.95</div>
<div class="c" style="left:300px;top:111px;">0.05</div>
<div class="a" style="left:1px;top:127px;width:31px;height:20px;background:#f0f0f0;"></div>
<div class="a" style="left:1px;top:127px;width:31px;height:1px;background:#ffffff;"></div>
<div class="a" style="left:32px;top:127px;width:1px;height:21px;background:#646464;"></div>
<div class="a" style="left:2px;top:147px;width:30px;height:1px;background:#646464;"></div>
<div class="a" style="left:33px;top:147px;width:377px;height:1px;background:#dbe5f1;"></div>
<div class="c" style="left:1px;top:132px;width:31px;text-align:center;">6</div>
<div class="c" style="left:36px;top:132px;color:#6d6d6d;">0.25</div>
<div class="c" style="left:168px;top:132px;">3.94</div>
<div class="c" style="left:300px;top:132px;">0.05</div>
<div class="a" style="left:1px;top:148px;width:31px;height:20px;background:#f0f0f0;"></div>
<div class="a" style="left:1px;top:148px;width:31px;height:1px;background:#ffffff;"></div>
<div class="a" style="left:32px;top:148px;width:1px;height:21px;background:#646464;"></div>
<div class="a" style="left:2px;top:168px;width:30px;height:1px;background:#646464;"></div>
<div class="a" style="left:33px;top:168px;width:377px;height:1px;background:#dbe5f1;"></div>
<div class="c" style="left:1px;top:153px;width:31px;text-align:center;">7</div>
<div class="c" style="left:36px;top:153px;color:#6d6d6d;">0.25</div>
<div class="c" style="left:168px;top:153px;">3.93</div>
<div class="c" style="left:300px;top:153px;">0.05</div>
<div class="a" style="left:1px;top:169px;width:31px;height:20px;background:#f0f0f0;"></div>
<div class="a" style="left:1px;top:169px;width:31px;height:1px;background:#ffffff;"></div>
<div class="a" style="left:32px;top:169px;width:1px;height:21px;background:#646464;"></div>
<div class="a" style="left:2px;top:189px;width:30px;height:1px;background:#646464;"></div>
<div class="a" style="left:33px;top:189px;width:377px;height:1px;background:#dbe5f1;"></div>
<div class="c" style="left:1px;top:174px;width:31px;text-align:center;">8</div>
<div class="c" style="left:36px;top:174px;color:#6d6d6d;">0.25</div>
<div class="c" style="left:168px;top:174px;">3.92</div>
<div class="c" style="left:300px;top:174px;">0.05</div>
<div class="a" style="left:1px;top:190px;width:31px;height:20px;background:#f0f0f0;"></div>
<div class="a" style="left:1px;top:190px;width:31px;height:1px;background:#ffffff;"></div>
<div class="a" style="left:32px;top:190px;width:1px;height:21px;background:#646464;"></div>
<div class="a" style="left:2px;top:210px;width:30px;height:1px;background:#646464;"></div>
<div class="a" style="left:33px;top:210px;width:377px;height:1px;background:#dbe5f1;"></div>
<div class="c" style="left:1px;top:195px;width:31px;text-align:center;">9</div>
<div class="c" style="left:36px;top:195px;color:#6d6d6d;">0.26</div>
<div class="c" style="left:168px;top:195px;">3.91</div>
<div class="c" style="left:300px;top:195px;">0.05</div>
<div class="a" style="left:1px;top:211px;width:31px;height:20px;background:#f0f0f0;"></div>
<div class="a" style="left:1px;top:211px;width:31px;height:1px;background:#ffffff;"></div>
<div class="a" style="left:32px;top:211px;width:1px;height:21px;background:#646464;"></div>
<div class="a" style="left:2px;top:231px;width:30px;height:1px;background:#646464;"></div>
<div class="a" style="left:33px;top:231px;width:377px;height:1px;background:#dbe5f1;"></div>
<div class="c" style="left:1px;top:216px;width:31px;text-align:center;">10</div>
<div class="c" style="left:36px;top:216px;color:#6d6d6d;">0.26</div>
<div class="c" style="left:168px;top:216px;">3.90</div>
<div class="c" style="left:300px;top:216px;">0.05</div>
<div class="a" style="left:1px;top:232px;width:31px;height:20px;background:#f0f0f0;"></div>
<div class="a" style="left:1px;top:232px;width:31px;height:1px;background:#ffffff;"></div>
<div class="a" style="left:32px;top:232px;width:1px;height:21px;background:#646464;"></div>
<div class="a" style="left:2px;top:252px;width:30px;height:1px;background:#646464;"></div>
<div class="a" style="left:33px;top:252px;width:377px;height:1px;background:#dbe5f1;"></div>
<div class="c" style="left:1px;top:237px;width:31px;text-align:center;">11</div>
<div class="c" style="left:36px;top:237px;color:#6d6d6d;">0.26</div>
<div class="c" style="left:168px;top:237px;">3.89</div>
<div class="c" style="left:300px;top:237px;">0.05</div>
<div class="a" style="left:164px;top:22px;width:1px;height:222px;background:#dbe5f1;"></div>
<div class="a" style="left:296px;top:22px;width:1px;height:222px;background:#dbe5f1;"></div>
<div class="a" style="left:410px;top:22px;width:1px;height:222px;background:#dbe5f1;"></div>
<div class="a" style="left:412px;top:18px;width:15px;height:17px;background:#cdcdcd;"></div>
</div>
<svg class="a" style="left:424px;top:302px" width="17" height="244"><polyline points="5.4,12.6 8.5,8.8 11.6,12.6" fill="none" stroke="#606060" stroke-width="2.2"/><polyline points="5.4,233.4 8.5,237.2 11.6,233.4" fill="none" stroke="#606060" stroke-width="2.2"/></svg>
<div class="lbl" style="left:456px;top:322px;font-size:11px;">Name</div>
<div class="lbl" style="left:456px;top:355px;">Drawing type</div>
<div class="lbl" style="left:456px;top:387px;font-size:12px;">Input type</div>
<div class="lbl" style="left:456px;top:426px;color:#9a9a9a;">Max frequency</div>
<div class="lbl" style="left:456px;top:456px;color:#9a9a9a;">Step</div>
<div class="box" style="left:562px;top:315px;width:174px;height:23px;border:1px solid #7a7a7a;background:#fff;"></div>
<div class="lbl" style="left:568px;top:320px;font-size:11px;letter-spacing:-0.6px;">FS1</div>
<div class="box" style="left:561px;top:348px;width:176px;height:21px;border:1px solid #adadad;background:#e1e1e1;"></div>
<div class="lbl" style="left:565px;top:354px;">Period</div>
<div class="box" style="left:557px;top:380px;width:184px;height:29px;border:4px solid #ff0000;border-radius:2px;"></div>
<div class="box" style="left:561px;top:384px;width:176px;height:21px;border:1px solid #adadad;background:#e1e1e1;"></div>
<div class="lbl" style="left:565px;top:390px;font-size:12.2px;">Manual input</div>
<svg class="a" style="left:723px;top:356px" width="10" height="6"><polyline points="1.2,1 5,4.7 8.8,1" fill="none" stroke="#3a3a3a" stroke-width="1.4"/></svg>
<svg class="a" style="left:723px;top:392px" width="10" height="6"><polyline points="1.2,1 5,4.7 8.8,1" fill="none" stroke="#3a3a3a" stroke-width="1.4"/></svg>
<div class="box" style="left:562px;top:418px;width:123px;height:20px;border:1px solid #cccccc;background:#f0f0f0;box-shadow:inset 0 0 0 1px #fff;"></div>
<div class="lbl" style="left:568px;top:423px;color:#6d6d6d;font-size:11px;">30.00</div>
<div class="lbl" style="left:708px;top:424px;color:#969696;">Hz</div>
<div class="box" style="left:562px;top:449px;width:125px;height:20px;border:1px solid #cccccc;background:#f0f0f0;box-shadow:inset 0 0 0 1px #fff;"></div>
<div class="lbl" style="left:568px;top:454px;color:#6d6d6d;font-size:11px;">0.25</div>
<div class="lbl" style="left:708px;top:454px;color:#969696;">Hz</div>
<div class="box" style="left:562px;top:484px;width:174px;height:21px;border:1px solid #bfbfbf;background:#cccccc;"></div>
<div class="lbl" style="left:562px;top:489px;width:174px;text-align:center;color:#838383;font-size:11.2px;">Code parameters</div>
<div class="box" style="left:571px;top:529px;width:73px;height:21px;border:2px solid #0078d7;background:#e1e1e1;"></div>
<div class="lbl" style="left:571px;top:535px;width:73px;text-align:center;font-size:11px;">OK</div>
<div class="box" style="left:662px;top:529px;width:73px;height:21px;border:1px solid #adadad;background:#e1e1e1;"></div>
<div class="lbl" style="left:662px;top:535px;width:73px;text-align:center;font-size:11px;">Cancel</div>
</body></html>
